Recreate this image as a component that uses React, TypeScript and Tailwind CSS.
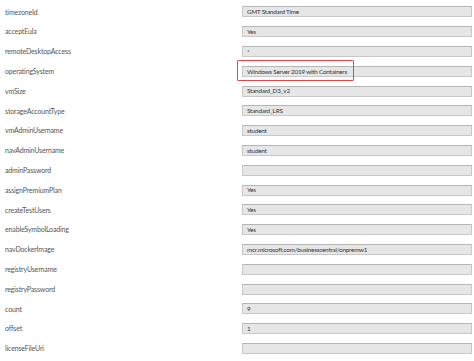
const params: [string, string][] = [
  ['timezoneId', 'GMT Standard Time'],
  ['acceptEula', 'Yes'],
  ['remoteDesktopAccess', '*'],
  ['operatingSystem', 'Windows Server 2019 with Containers'],
  ['vmSize', 'Standard_D3_v2'],
  ['storageAccountType', 'Standard_LRS'],
  ['vmAdminUsername', 'student'],
  ['navAdminUsername', 'student'],
  ['adminPassword', ''],
  ['assignPremiumPlan', 'Yes'],
  ['createTestUsers', 'Yes'],
  ['enableSymbolLoading', 'Yes'],
  ['navDockerImage', 'mcr.microsoft.com/businesscentral/onpremw1'],
  ['registryUsername', ''],
  ['registryPassword', ''],
  ['count', '9'],
  ['offset', '1'],
  ['licenseFileUri', ''],
];

export default function App() {
  return (
    <div
      className="w-[474px] h-[361px] bg-white overflow-hidden pt-[2px]"
      style={{ fontFamily: 'Lato, "Noto Sans", sans-serif' }}
    >
      {params.map(([name, value]) => (
        <div key={name} className="flex items-center h-[19.8px]">
          <div className="w-[242px] shrink-0 pl-[5px] text-[7px] tracking-[-0.15px] text-[#555]">{name}</div>
          <div className="relative flex-1 pr-[2px]">
            <div className="h-[11px] flex items-center bg-[#e6e6e6] border border-[#c8c8c8] border-t-[#b5b5b5] pl-[4px] text-[6.3px] tracking-[-0.2px] text-[#333]">
              {value}
            </div>
            {name === 'operatingSystem' && (
              <div className="absolute left-[-5px] top-[-5.5px] w-[117px] h-[21px] border-[1.5px] border-[#dc4a4a] rounded-[1px]" />
            )}
          </div>
        </div>
      ))}
    </div>
  );
}
